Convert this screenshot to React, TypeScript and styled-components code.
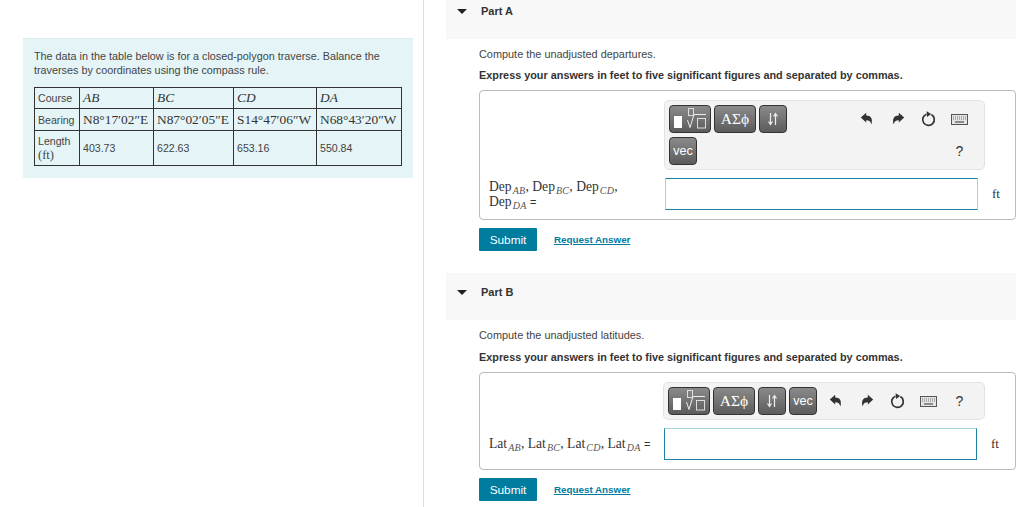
import * as React from 'react';
import styled, {createGlobalStyle} from 'styled-components';

const GlobalStyle = createGlobalStyle`
  html, body {
    margin: 0;
    padding: 0;
    height: 507px;
    overflow: hidden;
    background: #fff;
    color: #333;
    font-family: "Liberation Sans", Arial, sans-serif;
    font-size: 11px;
  }
`;

const COURSES = [
    {name: 'AB', bearing: 'N8°17′02″E', length: '403.73'},
    {name: 'BC', bearing: 'N87°02′05″E', length: '622.63'},
    {name: 'CD', bearing: 'S14°47′06″W', length: '653.16'},
    {name: 'DA', bearing: 'N68°43′20″W', length: '550.84'},
];

const UndoIcon = () => (
    <svg width="14" height="14" viewBox="0 0 14 14">
        <path d="M0.8 5.5 L6.2 0.8 V3.4 C10.8 3.4 13 6.2 11.4 12.6 C10.8 9.6 9.4 8.2 6.2 8.2 V10.4 Z" fill="#333" />
    </svg>
);

const RedoIcon = () => (
    <svg width="14" height="14" viewBox="0 0 14 14">
        <path d="M13.2 5.5 L7.8 0.8 V3.4 C3.2 3.4 1 6.2 2.6 12.6 C3.2 9.6 4.6 8.2 7.8 8.2 V10.4 Z" fill="#333" />
    </svg>
);

const ResetIcon = () => (
    <svg width="16" height="16" viewBox="0 0 16 16">
        <path d="M10.4 3.6 A5.8 5.8 0 1 1 5.4 3.2" fill="none" stroke="#333" strokeWidth="1.7" />
        <path d="M5.6 0.2 L10.2 3 L6 6 Z" fill="#333" />
    </svg>
);

const KeyboardIcon = () => (
    <svg width="17" height="11" viewBox="0 0 17 11">
        <rect x="0.5" y="0.5" width="16" height="10" fill="#e4e4e4" stroke="#555" />
        <path d="M2 3 H15 M2 5 H15" stroke="#777" strokeWidth="1" strokeDasharray="1 1" />
        <path d="M4 8 H13" stroke="#666" strokeWidth="1.4" />
    </svg>
);

const TemplateIcon = () => (
    <svg width="36" height="24" viewBox="0 0 36 24">
        <rect x="2" y="9" width="8" height="12" fill="#fff" />
        <rect x="16.5" y="1.5" width="5" height="7" fill="none" stroke="#ddd" />
        <path d="M15.5 13 L18 20.5 L22 7.5 H34" fill="none" stroke="#eee" strokeWidth="1" />
        <rect x="25.5" y="11.5" width="8" height="9.5" fill="none" stroke="#ddd" />
    </svg>
);

const ArrowsIcon = () => (
    <svg width="12" height="14" viewBox="0 0 12 14">
        <path d="M3.5 1 V12 M1.5 9.5 L3.5 12.5 L5.5 9.5 M8.5 13 V2 M6.5 4.5 L8.5 1.5 L10.5 4.5" fill="none" stroke="#eee" strokeWidth="1.2" />
    </svg>
);

const CaretIcon = () => (
    <svg width="10" height="5" viewBox="0 0 10 5">
        <path d="M0 0 H10 L5 5 Z" fill="#222" />
    </svg>
);

// one term of the label, kept whole so a line only breaks between terms
const Terms = ({name}: {name: string}) => (
    <>
        {COURSES.map((c, i) => (
            <React.Fragment key={c.name}>
                <Term>{name}<SubText>{c.name}</SubText>{i < COURSES.length - 1 ? ',' : ''}</Term>{' '}
            </React.Fragment>
        ))}
        <Equals>=</Equals>
    </>
);

const Toolbar = ({wrapped}: {wrapped?: boolean}) => (
    <ToolbarRoot $wrapped={wrapped}>
        <Palette $wrapped={wrapped}>
            <PaletteButton $width={42}><TemplateIcon /></PaletteButton>
            <PaletteButton $width={42} $serif>ΑΣϕ</PaletteButton>
            <PaletteButton $width={28}><ArrowsIcon /></PaletteButton>
            <PaletteButton $width={28}>vec</PaletteButton>
        </Palette>
        <Tools $wrapped={wrapped}>
            <ToolCell><UndoIcon /></ToolCell>
            <ToolCell><RedoIcon /></ToolCell>
            <ToolCell><ResetIcon /></ToolCell>
            <ToolCell><KeyboardIcon /></ToolCell>
            <ToolCell $help>?</ToolCell>
        </Tools>
    </ToolbarRoot>
);

const App = () => (
    <Page>
        <GlobalStyle />
        <LeftColumn>
            <IntroPanel>
                <IntroText>
                    The data in the table below is for a closed-polygon traverse. Balance the traverses by coordinates using the compass rule.
                </IntroText>
                <DataTable>
                    <colgroup>
                        <col width="45" />
                        <col width="74" />
                        <col width="80" />
                        <col width="83" />
                        <col width="85" />
                    </colgroup>
                    <tbody>
                        <TableRow $height={21}>
                            <Cell>Course</Cell>
                            {COURSES.map(c => <MathCell key={c.name}><i>{c.name}</i></MathCell>)}
                        </TableRow>
                        <TableRow $height={22}>
                            <Cell>Bearing</Cell>
                            {COURSES.map(c => <MathCell key={c.name}>{c.bearing}</MathCell>)}
                        </TableRow>
                        <TableRow $height={35}>
                            <Cell>Length <MathInline>(ft)</MathInline></Cell>
                            {COURSES.map(c => <Cell key={c.name}>{c.length}</Cell>)}
                        </TableRow>
                    </tbody>
                </DataTable>
            </IntroPanel>
        </LeftColumn>

        <RightColumn>
            <PartHeader $height={39}>
                <CaretIcon />
                <PartTitle>Part A</PartTitle>
            </PartHeader>
            <Prompt>Compute the unadjusted departures.</Prompt>
            <Instruction $gap={8}>Express your answers in feet to five significant figures and separated by commas.</Instruction>
            <AnswerBox>
                <Toolbar wrapped />
                <AnswerRow>
                    <AnswerLabel $width={176} $reserve={14}>
                        <Terms name="Dep" />
                    </AnswerLabel>
                    <AnswerInput $variant="sides" />
                    <Unit>ft</Unit>
                </AnswerRow>
            </AnswerBox>
            <Actions>
                <SubmitButton>Submit</SubmitButton>
                <RequestLink>Request Answer</RequestLink>
            </Actions>

            <PartHeader $height={47} $spaced>
                <CaretIcon />
                <PartTitle>Part B</PartTitle>
            </PartHeader>
            <Prompt>Compute the unadjusted latitudes.</Prompt>
            <Instruction $gap={9}>Express your answers in feet to five significant figures and separated by commas.</Instruction>
            <AnswerBox>
                <Toolbar />
                <AnswerRow>
                    <AnswerLabel $width={175} $reserve={0}>
                        <Terms name="Lat" />
                    </AnswerLabel>
                    <AnswerInput $variant="top" />
                    <Unit>ft</Unit>
                </AnswerRow>
            </AnswerBox>
            <Actions>
                <SubmitButton>Submit</SubmitButton>
                <RequestLink>Request Answer</RequestLink>
            </Actions>
        </RightColumn>
    </Page>
);

export default App;

const Page = styled.div`
  display: flex;
  height: 507px;
  overflow: hidden;
`;

const LeftColumn = styled.div`
  box-sizing: border-box;
  width: 424px;
  height: 507px;
  flex: none;
  padding: 38px 10px 0 23px;
  border-right: 1px solid #ddd;
`;

const IntroPanel = styled.div`
  box-sizing: border-box;
  height: 140px;
  padding: 10px 11px 0;
  background: #e5f5f7;
  border-top: 1px solid #dcebee;
`;

const IntroText = styled.p`
  margin: 0 0 10px;
  font-size: 10.8px;
  line-height: 14px;
  color: #444;
`;

const DataTable = styled.table`
  width: 367px;
  border-collapse: collapse;
  table-layout: fixed;
`;

const TableRow = styled.tr<{$height: number}>`
  height: ${p => p.$height}px;
`;

const Cell = styled.td`
  border: 1px solid #333;
  padding: 0 3px;
  font-size: 10.6px;
  line-height: 14px;
  color: #444;
  white-space: normal;
`;

const MathCell = styled(Cell)`
  font-family: "Liberation Serif", serif;
  font-size: 13.4px;
  white-space: nowrap;
  padding: 0 3px;
  color: #333;
`;

const MathInline = styled.span`
  font-family: "Liberation Serif", serif;
  font-size: 12.5px;
`;

const RightColumn = styled.div`
  width: 570px;
  margin-left: 22px;
  flex: none;
`;

const PartHeader = styled.div<{$height: number; $spaced?: boolean}>`
  box-sizing: border-box;
  display: flex;
  align-items: flex-start;
  height: ${p => p.$height}px;
  margin-top: ${p => (p.$spaced ? '22px' : '0')};
  padding: ${p => (p.$spaced ? '13px' : '5px')} 0 0 11px;
  background: #f8f8f8;

  svg {
    margin-top: 4px;
  }
`;

const PartTitle = styled.div`
  margin-left: 14px;
  font-size: 11px;
  font-weight: bold;
  line-height: 13px;
  color: #333;
`;

const Prompt = styled.p`
  margin: 9px 0 0 33px;
  font-size: 10.9px;
  line-height: 13px;
  color: #444;
`;

const Instruction = styled.p<{$gap: number}>`
  margin: ${p => p.$gap}px 0 0 33px;
  font-size: 10.85px;
  font-weight: bold;
  line-height: 13px;
  color: #333;
`;

const AnswerBox = styled.div`
  box-sizing: border-box;
  margin: 8px 0 0 33px;
  width: 537px;
  padding: 9px 0 9px 9px;
  border: 1px solid #bbb;
  border-radius: 4px;
  background: #fff;
`;

const ToolbarRoot = styled.div<{$wrapped?: boolean}>`
  box-sizing: border-box;
  display: flex;
  width: ${p => (p.$wrapped ? '321px' : '322px')};
  margin-left: auto;
  margin-right: 30px;
  padding: 4px 9px 4px 4px;
  background: #f3f3f3;
  border: 1px solid #e2e2e2;
  border-radius: 5px;
`;

const Palette = styled.div<{$wrapped?: boolean}>`
  display: flex;
  flex-wrap: wrap;
  gap: 4px 3px;
  width: ${p => (p.$wrapped ? '122px' : '152px')};
  flex: none;
`;

const PaletteButton = styled.div<{$width: number; $serif?: boolean}>`
  box-sizing: border-box;
  display: flex;
  align-items: center;
  justify-content: center;
  width: ${p => p.$width}px;
  height: 28px;
  border: 1px solid #333;
  border-radius: 4px;
  background: linear-gradient(#8a8a8a, #5c5c5c);
  color: #fff;
  font-family: ${p => (p.$serif ? '"Liberation Serif", serif' : '"Liberation Sans", sans-serif')};
  font-size: ${p => (p.$serif ? '15.5px' : '12.5px')};
`;

const Tools = styled.div<{$wrapped?: boolean}>`
  display: flex;
  flex-wrap: wrap;
  justify-content: flex-end;
  gap: 4px 0;
  width: ${p => (p.$wrapped ? '124px' : '155px')};
  margin-left: auto;
`;

const ToolCell = styled.div<{$help?: boolean}>`
  display: flex;
  align-items: center;
  justify-content: center;
  width: 31px;
  height: 28px;
  font-size: ${p => (p.$help ? '14px' : '12px')};
  color: #333;
`;

const AnswerRow = styled.div`
  display: flex;
  align-items: center;
  margin-top: 8px;
`;

const AnswerLabel = styled.div<{$width: number; $reserve: number}>`
  box-sizing: border-box;
  width: ${p => p.$width}px;
  padding-right: ${p => p.$reserve}px;
  flex: none;
  font-family: "Liberation Serif", serif;
  font-size: 13.6px;
  line-height: 15px;
  color: #333;
`;

const Term = styled.span`
  white-space: nowrap;
`;

const SubText = styled.sub`
  font-style: italic;
  font-size: 10px;
  line-height: 0;
  vertical-align: -3px;
  margin-left: 1px;
  letter-spacing: 0.3px;
  color: #555;
`;

const Equals = styled.span`
  font-family: "Liberation Sans", sans-serif;
  font-size: 11px;
`;

const AnswerInput = styled.div<{$variant: 'sides' | 'top'}>`
  box-sizing: border-box;
  width: 313px;
  height: 32px;
  flex: none;
  background: #fff;
  border: 1px solid #1b82a1;
  ${p => (p.$variant === 'sides'
        ? 'border-left-color: #a5d3e0; border-right-color: #a5d3e0;'
        : 'border-top-color: #a5d3e0;')}
`;

const Unit = styled.div`
  margin-left: 14px;
  font-family: "Liberation Serif", serif;
  font-size: 13px;
  color: #333;
`;

const Actions = styled.div`
  display: flex;
  align-items: center;
  margin: 8px 0 0 33px;
`;

const SubmitButton = styled.div`
  display: flex;
  align-items: center;
  justify-content: center;
  width: 58px;
  height: 23px;
  background: #007c9f;
  color: #fff;
  font-size: 11.8px;
  border-radius: 1px;
`;

const RequestLink = styled.a`
  margin-left: 17px;
  color: #007c9f;
  font-size: 9.8px;
  font-weight: bold;
  text-decoration: underline;
`;
